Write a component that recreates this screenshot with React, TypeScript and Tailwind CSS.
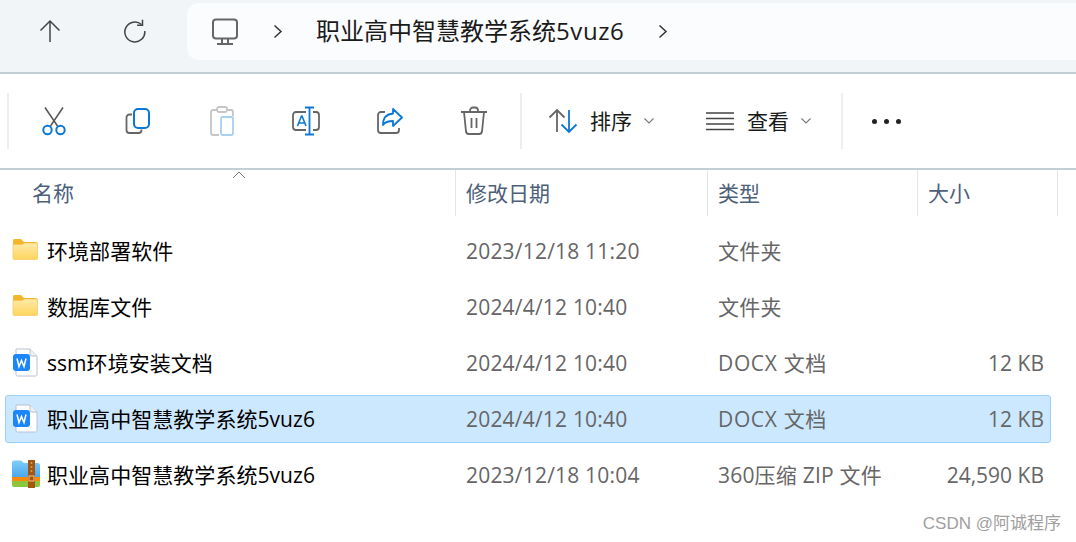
const font = "font-['Open_Sans','Noto_Sans_CJK_SC',sans-serif]"

function UpIcon() {
    return (
        <svg width="22" height="24" viewBox="0 0 22 24" fill="none" stroke="#444" strokeWidth="1.5">
            <path d="M11 23V2M1.500 11.500 11 2l9.500 9.500" />
        </svg>
    )
}

function RefreshIcon() {
    return (
        <svg width="24" height="24" viewBox="0 0 24 24" fill="none" stroke="#444" strokeWidth="1.5">
            <path d="M18.500 5.500A10 10 0 1 0 21.800 12" />
            <path d="M19.500 0.800v5.400h-5.400" />
        </svg>
    )
}

function MonitorIcon() {
    return (
        <svg width="28" height="28" viewBox="0 0 28 28" fill="none" stroke="#666" strokeWidth="2">
            <rect x="2" y="1.500" width="24" height="19" rx="3" />
            <path d="M11 21v4M17 21v4M6 26h16" />
        </svg>
    )
}

function Chevron() {
    return (
        <svg width="10" height="15" viewBox="0 0 10 15" fill="none" stroke="#333" strokeWidth="1.500">
            <path d="M1.500 1.500 8 7.500l-6.500 6" />
        </svg>
    )
}

function ScissorsIcon() {
    return (
        <svg width="28" height="30" viewBox="0 0 28 30" fill="none" strokeWidth="1.500">
            <path d="M5 1.500 17.500 20M23 1.500 10.500 20" stroke="#555" />
            <circle cx="7.500" cy="24" r="4.200" stroke="#0a78d4" strokeWidth="2" />
            <circle cx="20.500" cy="24" r="4.200" stroke="#0a78d4" strokeWidth="2" />
        </svg>
    )
}

function CopyIcon() {
    return (
        <svg width="28" height="28" viewBox="0 0 28 28" fill="none" strokeWidth="1.800">
            <path d="M8 7.500H5.500a3 3 0 0 0-3 3V23a3 3 0 0 0 3 3h9a3 3 0 0 0 3-3v-.5" stroke="#666" />
            <rect x="10" y="2" width="15" height="19" rx="4" stroke="#0a78d4" strokeWidth="2" />
        </svg>
    )
}

function PasteIcon() {
    return (
        <svg width="26" height="30" viewBox="0 0 26 30" fill="none" strokeWidth="1.800">
            <path d="M9 4H4a2 2 0 0 0-2 2v21a2 2 0 0 0 2 2h6M17 4h5a2 2 0 0 1 2 2v4" stroke="#c5c5c5" />
            <rect x="8" y="1" width="10" height="5" rx="2" stroke="#c5c5c5" />
            <rect x="12" y="11" width="12" height="18" rx="1.500" stroke="#a8d0f0" />
        </svg>
    )
}

function RenameIcon() {
    return (
        <svg width="30" height="30" viewBox="0 0 30 30" fill="none">
            <path d="M15 6H5a3 3 0 0 0-3 3v12a3 3 0 0 0 3 3h10M22 6h3a3 3 0 0 1 3 3v12a3 3 0 0 1-3 3h-3" stroke="#666" strokeWidth="1.800" />
            <path d="M14 1.500h9M18.500 1.500v27M14 28.500h9" stroke="#0a78d4" strokeWidth="1.800" />
            <path d="M6.500 20 10.500 10h.5l4 10M8 17h6" stroke="#0a78d4" strokeWidth="1.600" />
        </svg>
    )
}

function ShareIcon() {
    return (
        <svg width="28" height="28" viewBox="0 0 28 28" fill="none">
            <path d="M9 5H5a3 3 0 0 0-3 3v15a3 3 0 0 0 3 3h15a3 3 0 0 0 3-3v-2" stroke="#666" strokeWidth="1.800" />
            <path d="M17 2l9 8.500-9 8.500v-5c-5 0-8 1-10 4 0-7 4-11 10-11.500z" stroke="#0a78d4" strokeWidth="1.800" strokeLinejoin="round" />
        </svg>
    )
}

function TrashIcon() {
    return (
        <svg width="28" height="30" viewBox="0 0 28 30" fill="none" stroke="#666" strokeWidth="1.800">
            <path d="M1 6h26M10 6V4.500a3 3 0 0 1 3-3h2a3 3 0 0 1 3 3V6" />
            <path d="M4 6l2 19.500a3 3 0 0 0 3 2.500h10a3 3 0 0 0 3-2.500L24 6" />
            <path d="M11.500 12v10M16.500 12v10" />
        </svg>
    )
}

function SortIcon() {
    return (
        <svg width="30" height="26" viewBox="0 0 30 26" fill="none" strokeWidth="1.800">
            <path d="M9 24V2M1.500 9.500 9 2l7.500 7.500" stroke="#666" />
            <path d="M21 2v22M13.500 16.500 21 24l7.500-7.500" stroke="#0a78d4" />
        </svg>
    )
}

function ListIcon() {
    return (
        <svg width="28" height="20" viewBox="0 0 28 20" fill="none" stroke="#444" strokeWidth="1.500">
            <path d="M0 2h28M0 7.500h28M0 13h28M0 18.500h28" />
        </svg>
    )
}

function SmallChevron() {
    return (
        <svg width="10" height="6" viewBox="0 0 10 6" fill="none" stroke="#777" strokeWidth="1.100">
            <path d="M.5.500 5 5 9.500.500" />
        </svg>
    )
}

function FolderIcon() {
    return (
        <svg width="26" height="22" viewBox="0 0 26 22" className="shrink-0 -translate-y-[2px]">
            <defs>
                <linearGradient id="folderBody" x1="0" y1="0" x2="0" y2="1">
                    <stop offset="0" stopColor="#ffe9a8" />
                    <stop offset="1" stopColor="#fdd65f" />
                </linearGradient>
            </defs>
            <path d="M1 2.500A1.500 1.500 0 0 1 2.500 1H9l3 3h12a1.500 1.500 0 0 1 1.500 1.500V7H1z" fill="#f5b52d" />
            <path d="M1 6.500h9l2.500-1.500H25.500v15A1.500 1.500 0 0 1 24 21.500H2.500A1.500 1.500 0 0 1 1 20z" fill="url(#folderBody)" stroke="#f2c14c" strokeWidth=".6" />
        </svg>
    )
}

function WordIcon() {
    return (
        <svg width="26" height="29" viewBox="0 0 26 29" className="shrink-0 -translate-y-[1px]">
            <path d="M4 1h14l7 7v18.500a1.500 1.500 0 0 1-1.500 1.500h-18A1.500 1.500 0 0 1 4 26.500z" fill="#fff" stroke="#b9c0cf" />
            <path d="M18 1v5.500A1.500 1.500 0 0 0 19.500 8H25" fill="#eef1f6" stroke="#b9c0cf" />
            <rect x="1" y="6" width="17" height="17" rx="3" fill="#1a86fa" />
            <path d="M5 10.500 7 18.500 9.500 12.500 12 18.500 14 10.500" fill="none" stroke="#fff" strokeWidth="1.500" />
        </svg>
    )
}

function ZipIcon() {
    return (
        <svg width="28" height="28" viewBox="0 0 28 28" className="shrink-0 -translate-y-[1px]">
            <defs>
                <linearGradient id="zipBody" x1="0" y1="0" x2="0" y2="1">
                    <stop offset="0" stopColor="#7fcdfc" />
                    <stop offset="1" stopColor="#4aa5ee" />
                </linearGradient>
            </defs>
            <path d="M0 3a2.500 2.500 0 0 1 2.500-2.500H9L12 3h13.500A2.500 2.500 0 0 1 28 5.500V18H0z" fill="url(#zipBody)" />
            <rect x="0" y="17" width="28" height="4" fill="#f78a0c" />
            <path d="M0 21h28v4a2 2 0 0 1-2 2H2a2 2 0 0 1-2-2z" fill="#8cc63f" />
            <rect x="16" y="0" width="7" height="28" fill="#a3560f" />
            <path d="M19.500 2v12" stroke="#d79a50" strokeWidth="1.500" strokeDasharray="2 2" />
            <rect x="17" y="16" width="5" height="5" fill="none" stroke="#f4c27c" />
        </svg>
    )
}

const rows = [
    { icon: <FolderIcon />, name: "环境部署软件", date: "2023/12/18 11:20", type: "文件夹", size: "" },
    { icon: <FolderIcon />, name: "数据库文件", date: "2024/4/12 10:40", type: "文件夹", size: "" },
    { icon: <WordIcon />, name: "ssm环境安装文档", date: "2024/4/12 10:40", type: "DOCX 文档", size: "12 KB", wideType: true },
    { icon: <WordIcon />, name: "职业高中智慧教学系统5vuz6", date: "2024/4/12 10:40", type: "DOCX 文档", size: "12 KB", selected: true, wideType: true },
    { icon: <ZipIcon />, name: "职业高中智慧教学系统5vuz6", date: "2023/12/18 10:04", type: "360压缩 ZIP 文件", size: "24,590 KB" },
]

function Row({ row }: { row: (typeof rows)[number] }) {
    return (
        <div className="flex h-14 items-center pl-[5px]">
            <div
                className={
                    row.selected
                        ? "grid h-12 w-[1046px] grid-cols-[451px_252px_210px_133px] items-center rounded-[3px] border border-[#99d1ff] bg-[#cce8ff] text-[21px]"
                        : "grid h-12 w-[1046px] grid-cols-[451px_252px_210px_133px] items-center border border-transparent text-[21px]"
                }
            >
                <div className="flex items-center">
                    <div className="flex w-[41px] pl-[6px]">{row.icon}</div>
                    <span className="pt-[2px] tracking-[0.05px] text-black">{row.name}</span>
                </div>
                <span className="pl-[9px] pt-[2px] tracking-[0.2px] text-[#666]">{row.date}</span>
                <span className={row.wideType ? "pl-[9px] pt-[2px] tracking-[0.65px] text-[#666]" : "pl-[9px] pt-[2px] tracking-[0.2px] text-[#666]"}>{row.type}</span>
                <span className="pr-[8px] pt-[2px] text-right text-[#666]">{row.size}</span>
            </div>
        </div>
    )
}

export default function App() {
    return (
        <div className={`relative h-[542px] w-[1076px] overflow-hidden bg-white ${font}`}>
            {/* top bar */}
            <div className="flex h-[74px] items-start border-b-2 border-[#c0d0d4] bg-[#f1f5f8]">
                <div className="flex h-[62px] w-[187px] items-center">
                    <div className="flex w-[100px] justify-center"><UpIcon /></div>
                    <div className="flex w-[70px] justify-center"><RefreshIcon /></div>
                </div>
                <div className="mt-[3px] flex h-[57px] flex-1 items-center rounded-l-xl bg-[#fbfcfd] pl-[24px]">
                    <MonitorIcon />
                    <div className="ml-[34px]"><Chevron /></div>
                    <span className="ml-[33px] pb-[2px] text-[24px] text-[#1a1a1a]">
                        职业高中智慧教学系统<span className="tracking-[0.6px]">5vuz6</span>
                    </span>
                    <div className="ml-[34px]"><Chevron /></div>
                </div>
            </div>

            {/* toolbar */}
            <div className="flex h-[96px] items-center border-b-2 border-[#c0d0d4] pl-[7px]">
                <div className="h-[56px] w-[2px] bg-[#eeeeee]" />
                <div className="flex w-[511px] items-center pl-[3px]">
                    <div className="flex w-[84px] justify-center"><ScissorsIcon /></div>
                    <div className="flex w-[84px] justify-center"><CopyIcon /></div>
                    <div className="flex w-[84px] justify-center"><PasteIcon /></div>
                    <div className="flex w-[84px] justify-center"><RenameIcon /></div>
                    <div className="flex w-[84px] justify-center"><ShareIcon /></div>
                    <div className="flex w-[84px] justify-center"><TrashIcon /></div>
                </div>
                <div className="h-[56px] w-[2px] bg-[#eeeeee]" />
                <div className="flex w-[157px] items-center pl-[26px] text-[21px] text-[#1a1a1a]">
                    <SortIcon />
                    <span className="ml-[12px] pt-[2px]">排序</span>
                    <div className="ml-[12px]"><SmallChevron /></div>
                </div>
                <div className="flex w-[162px] items-center pl-[27px] text-[21px] text-[#1a1a1a]">
                    <ListIcon />
                    <span className="ml-[13px] pt-[2px]">查看</span>
                    <div className="ml-[12px]"><SmallChevron /></div>
                </div>
                <div className="h-[56px] w-[2px] bg-[#eeeeee]" />
                <div className="ml-[29px] flex gap-[7px]">
                    <span className="size-[5px] rounded-full bg-[#222]" />
                    <span className="size-[5px] rounded-full bg-[#222]" />
                    <span className="size-[5px] rounded-full bg-[#222]" />
                </div>
            </div>

            {/* column header */}
            <div className="relative flex h-[46px] text-[21px] text-[#4c607a]">
                <svg width="14" height="8" viewBox="0 0 14 8" fill="none" stroke="#777" strokeWidth="1" className="absolute left-[232px] top-[1px]">
                    <path d="M1 7 7 1l6 6" />
                </svg>
                <div className="flex w-[456px] items-center border-r border-[#e5e5e5] pl-[32px] pt-[2px]">名称</div>
                <div className="flex w-[252px] items-center border-r border-[#e5e5e5] pl-[10px] pt-[2px]">修改日期</div>
                <div className="flex w-[210px] items-center border-r border-[#e5e5e5] pl-[10px] pt-[2px]">类型</div>
                <div className="flex w-[140px] items-center border-r border-[#e5e5e5] pl-[10px] pt-[2px]">大小</div>
            </div>

            {/* files */}
            <div className="pt-[7px]">
                {rows.map((row, i) => (
                    <Row key={i} row={row} />
                ))}
            </div>

            <span className="absolute bottom-[6px] right-[15px] font-['Liberation_Sans','Noto_Sans_CJK_SC',sans-serif] text-[17px] text-[#a0a0a0]">CSDN @阿诚程序</span>
        </div>
    )
}
